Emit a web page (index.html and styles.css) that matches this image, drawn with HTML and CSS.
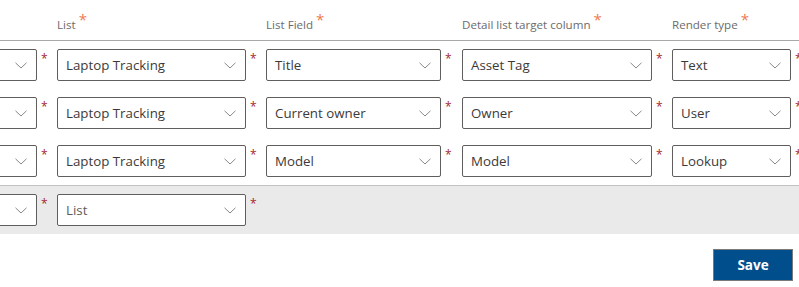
FILE: index.html
```html
<!DOCTYPE html>
<html>
<head>
<meta charset="utf-8">
<link rel="stylesheet" href="styles.css">
</head>
<body>
<div class="grid">
  <div class="row hdr">
    <div class="track">
      <div class="cell c1"><span class="label"></span></div>
      <div class="cell c2"><span class="label">List<span class="hreq">*</span></span></div>
      <div class="cell c3"><span class="label">List Field<span class="hreq">*</span></span></div>
      <div class="cell c4"><span class="label">Detail list target column<span class="hreq">*</span></span></div>
      <div class="cell c5"><span class="label">Render type<span class="hreq">*</span></span></div>
    </div>
  </div>

  <div class="row">
    <div class="track">
      <div class="cell c1"><div class="dd"><span class="val"></span><svg class="chev" viewBox="0 0 12 7"><path d="M0.5 0.8 L6 6 L11.5 0.8"/></svg></div><span class="req">*</span></div>
      <div class="cell c2"><div class="dd"><span class="val">Laptop Tracking</span><svg class="chev" viewBox="0 0 12 7"><path d="M0.5 0.8 L6 6 L11.5 0.8"/></svg></div><span class="req">*</span></div>
      <div class="cell c3"><div class="dd"><span class="val">Title</span><svg class="chev" viewBox="0 0 12 7"><path d="M0.5 0.8 L6 6 L11.5 0.8"/></svg></div><span class="req">*</span></div>
      <div class="cell c4"><div class="dd"><span class="val">Asset Tag</span><svg class="chev" viewBox="0 0 12 7"><path d="M0.5 0.8 L6 6 L11.5 0.8"/></svg></div><span class="req">*</span></div>
      <div class="cell c5"><div class="dd"><span class="val">Text</span><svg class="chev" viewBox="0 0 12 7"><path d="M0.5 0.8 L6 6 L11.5 0.8"/></svg></div><span class="req">*</span></div>
    </div>
  </div>

  <div class="row">
    <div class="track">
      <div class="cell c1"><div class="dd"><span class="val"></span><svg class="chev" viewBox="0 0 12 7"><path d="M0.5 0.8 L6 6 L11.5 0.8"/></svg></div><span class="req">*</span></div>
      <div class="cell c2"><div class="dd"><span class="val">Laptop Tracking</span><svg class="chev" viewBox="0 0 12 7"><path d="M0.5 0.8 L6 6 L11.5 0.8"/></svg></div><span class="req">*</span></div>
      <div class="cell c3"><div class="dd"><span class="val">Current owner</span><svg class="chev" viewBox="0 0 12 7"><path d="M0.5 0.8 L6 6 L11.5 0.8"/></svg></div><span class="req">*</span></div>
      <div class="cell c4"><div class="dd"><span class="val">Owner</span><svg class="chev" viewBox="0 0 12 7"><path d="M0.5 0.8 L6 6 L11.5 0.8"/></svg></div><span class="req">*</span></div>
      <div class="cell c5"><div class="dd"><span class="val">User</span><svg class="chev" viewBox="0 0 12 7"><path d="M0.5 0.8 L6 6 L11.5 0.8"/></svg></div><span class="req">*</span></div>
    </div>
  </div>

  <div class="row">
    <div class="track">
      <div class="cell c1"><div class="dd"><span class="val"></span><svg class="chev" viewBox="0 0 12 7"><path d="M0.5 0.8 L6 6 L11.5 0.8"/></svg></div><span class="req">*</span></div>
      <div class="cell c2"><div class="dd"><span class="val">Laptop Tracking</span><svg class="chev" viewBox="0 0 12 7"><path d="M0.5 0.8 L6 6 L11.5 0.8"/></svg></div><span class="req">*</span></div>
      <div class="cell c3"><div class="dd"><span class="val">Model</span><svg class="chev" viewBox="0 0 12 7"><path d="M0.5 0.8 L6 6 L11.5 0.8"/></svg></div><span class="req">*</span></div>
      <div class="cell c4"><div class="dd"><span class="val">Model</span><svg class="chev" viewBox="0 0 12 7"><path d="M0.5 0.8 L6 6 L11.5 0.8"/></svg></div><span class="req">*</span></div>
      <div class="cell c5"><div class="dd"><span class="val">Lookup</span><svg class="chev" viewBox="0 0 12 7"><path d="M0.5 0.8 L6 6 L11.5 0.8"/></svg></div><span class="req">*</span></div>
    </div>
  </div>

  <div class="row newrow">
    <div class="track">
      <div class="cell c1"><div class="dd"><span class="val"></span><svg class="chev" viewBox="0 0 12 7"><path d="M0.5 0.8 L6 6 L11.5 0.8"/></svg></div><span class="req">*</span></div>
      <div class="cell c2"><div class="dd"><span class="val ph">List</span><svg class="chev" viewBox="0 0 12 7"><path d="M0.5 0.8 L6 6 L11.5 0.8"/></svg></div><span class="req">*</span></div>
    </div>
  </div>
</div>

<div class="actions">
  <button class="save">Save</button>
</div>
</body>
</html>
```

FILE: styles.css
```css
html, body {
  margin: 0;
  padding: 0;
  background: #ffffff;
}

body {
  font-family: "Open Sans", "Noto Sans", "Liberation Sans", sans-serif;
  color: #323130;
  width: 799px;
  height: 287px;
  overflow: hidden;
}

.grid {
  width: 799px;
  overflow: hidden;
}

.row {
  height: 48px;
  padding: 8px 0;
  box-sizing: border-box;
}

.track {
  display: flex;
  margin-left: -113px;
  width: max-content;
}

.hdr {
  height: 41px;
  padding: 0;
  border-bottom: 1px solid #a8a8a8;
}

.hdr .track {
  height: 40px;
  align-items: flex-end;
}

.hdr .cell {
  padding-bottom: 7px;
  box-sizing: border-box;
}

.label {
  font-size: 11.6px;
  line-height: 16px;
  color: #6b6b6b;
  white-space: nowrap;
}

.hreq {
  color: #ee7a50;
  font-size: 15px;
  line-height: 10px;
  margin-left: 3px;
  position: relative;
  top: -4px;
}

.cell {
  display: flex;
  align-items: flex-start;
}

.c1 { width: 170px; }
.c2 { width: 209px; }
.c3 { width: 196px; }
.c4 { width: 210px; }
.c5 { width: 139px; }

.c1 .dd { width: 150px; }
.c2 .dd { width: 189px; }
.c3 .dd { width: 175px; }
.c4 .dd { width: 190px; }
.c5 .dd { width: 119px; }

.dd {
  height: 32px;
  box-sizing: border-box;
  border: 1px solid #605e5c;
  border-radius: 2px;
  background: #ffffff;
  display: flex;
  align-items: center;
  padding: 0 9px 0 8px;
  flex-shrink: 0;
}

.val {
  flex: 1;
  font-size: 13.3px;
  line-height: 20px;
  color: #3b3a39;
  white-space: nowrap;
  padding-bottom: 1px;
}

.val.ph {
  color: #5f5e5c;
}

.chev {
  width: 12px;
  height: 7px;
  fill: none;
  stroke: #8a8886;
  stroke-width: 1;
}

.req {
  color: #a4262c;
  font-size: 12px;
  line-height: 12px;
  padding-left: 4px;
  padding-top: 4px;
}

.newrow {
  height: 49px;
  border-top: 1px solid #c2c2c2;
  background: #eaeaea;
}

.actions {
  display: flex;
  justify-content: flex-end;
  padding: 15px 6px 0 0;
}

.save {
  width: 80px;
  height: 32px;
  box-sizing: border-box;
  background: #004e8c;
  border: 1px solid #7a7a7a;
  border-radius: 0;
  color: #ffffff;
  font-family: "Open Sans", "Noto Sans", "Liberation Sans", sans-serif;
  font-weight: 700;
  font-size: 13.5px;
  padding: 0 0 1px 0;
}
```
